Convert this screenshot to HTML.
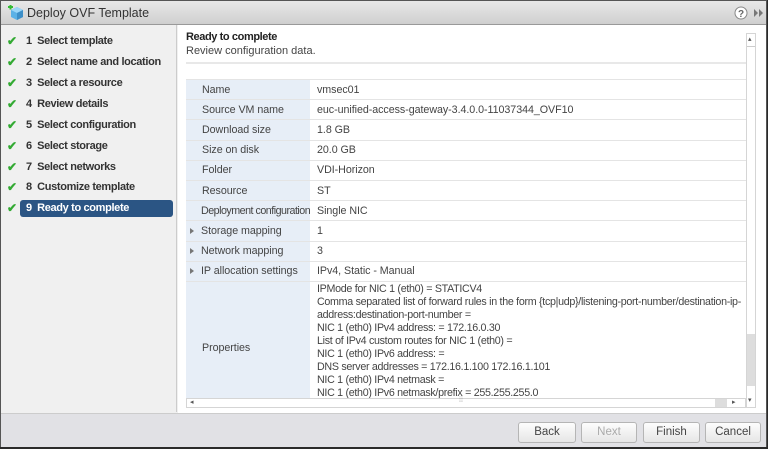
<!DOCTYPE html>
<html><head><meta charset="utf-8"><style>
*{margin:0;padding:0;box-sizing:border-box}
body{width:768px;height:449px;overflow:hidden;background:#2a2a2a;font-family:"Liberation Sans",sans-serif;font-size:11px;color:#333;position:relative}
.win{position:absolute;left:0;top:0;width:767px;height:447px;background:#f0f0f0;border:1px solid #555;}
.title{position:absolute;left:0;top:0;width:765px;height:24px;background:linear-gradient(#e8e8e8,#cfcfcf);border-bottom:1px solid #999}
.title span{position:absolute;left:26px;top:5px;font-size:12.5px;color:#333}
.left{position:absolute;left:0;top:24px;width:176px;height:387px;background:#f0f0f0;border-right:1px solid #ccc}
.step{position:absolute;left:0;height:17px;width:176px;font-weight:bold;font-size:11px;color:#333;letter-spacing:-0.35px;white-space:nowrap}
.step .ck{position:absolute;left:6px;top:1px;color:#3a3;font-size:12px;font-weight:bold;letter-spacing:0}
.step .t{position:absolute;left:25px;top:2px}
.sel{position:absolute;left:19px;width:153px;height:17px;background:#2b5584;border-radius:3px}
.right{position:absolute;left:177px;top:24px;width:588px;height:388px;background:#fff}
.bottom{position:absolute;left:0;top:412px;width:765px;height:34px;background:#e1e1e5;border-top:1px solid #ccc}
.btn{position:absolute;top:8px;height:21px;border:1px solid #b5b5b5;border-radius:3px;background:linear-gradient(#fdfdfd,#e6e6e6);text-align:center;line-height:19px;font-size:11.5px;color:#444}
.tw{position:absolute;left:8px;top:54px;width:560px;height:319px;overflow:hidden}
table{width:560px;border-collapse:collapse;table-layout:fixed}
td{border-top:1px solid #e4e4e4;height:20.2px;padding:0 0 0 7px;font-size:10.7px;color:#444;vertical-align:middle;white-space:nowrap;overflow:hidden;letter-spacing:-0.05px}
td.l{background:#e7eef7;width:124px;padding-left:16px}
td.l.a{padding-left:4px}
.tri{display:inline-block;width:0;height:0;border-left:4px solid #777;border-top:3px solid transparent;border-bottom:3px solid transparent;margin-right:7px}
</style></head><body>
<div class="win">
<div class="title">
<svg style="position:absolute;left:7px;top:4px" width="16" height="16"><polygon points="3,5 9,2 15,5 15,12 9,15 3,12" fill="#5bb1e6"/><polygon points="3,5 9,8 15,5 9,2" fill="#9bd6f7"/><polygon points="9,8 15,5 15,12 9,15" fill="#3d8fc8"/><rect x="0" y="1" width="5" height="2" fill="#3b3"/><rect x="1.5" y="-0.5" width="2" height="5" fill="#3b3"/></svg>
<span>Deploy OVF Template</span>
<svg style="position:absolute;left:733px;top:5px" width="14" height="14"><circle cx="7" cy="7" r="6" fill="#fff" stroke="#888"/><text x="7" y="11" font-size="10" text-anchor="middle" fill="#666" font-family="Liberation Sans" font-weight="bold">?</text></svg>
<svg style="position:absolute;left:753px;top:8px" width="10" height="8"><polygon points="0,0 4,4 0,8" fill="#777"/><polygon points="5,0 9,4 5,8" fill="#777"/></svg>
</div>
<div class="left">
<div class="step" style="top:8px"><span class="ck">✔</span><span class="t">1&nbsp; Select template</span></div>
<div class="step" style="top:29px"><span class="ck">✔</span><span class="t">2&nbsp; Select name and location</span></div>
<div class="step" style="top:50px"><span class="ck">✔</span><span class="t">3&nbsp; Select a resource</span></div>
<div class="step" style="top:71px"><span class="ck">✔</span><span class="t">4&nbsp; Review details</span></div>
<div class="step" style="top:92px"><span class="ck">✔</span><span class="t">5&nbsp; Select configuration</span></div>
<div class="step" style="top:113px"><span class="ck">✔</span><span class="t">6&nbsp; Select storage</span></div>
<div class="step" style="top:134px"><span class="ck">✔</span><span class="t">7&nbsp; Select networks</span></div>
<div class="step" style="top:154px"><span class="ck">✔</span><span class="t">8&nbsp; Customize template</span></div>
<div class="sel" style="top:175px"></div>
<div class="step" style="top:175px;color:#fff"><span class="ck">✔</span><span class="t">9&nbsp; Ready to complete</span></div>
</div>
<div class="right">
<div style="position:absolute;left:8px;top:6px;font-weight:bold;font-size:11px;color:#222;letter-spacing:-0.4px">Ready to complete</div>
<div style="position:absolute;left:8px;top:20px;font-size:11px;color:#444">Review configuration data.</div>
<div style="position:absolute;left:8px;top:37px;width:560px;height:2px;background:#e8e8e8"></div>
<div class="tw">
<table>
<tr><td class="l">Name</td><td>vmsec01</td></tr>
<tr><td class="l">Source VM name</td><td>euc-unified-access-gateway-3.4.0.0-11037344_OVF10</td></tr>
<tr><td class="l">Download size</td><td>1.8 GB</td></tr>
<tr><td class="l">Size on disk</td><td>20.0 GB</td></tr>
<tr><td class="l">Folder</td><td>VDI-Horizon</td></tr>
<tr><td class="l">Resource</td><td>ST</td></tr>
<tr><td class="l" style="letter-spacing:-0.5px;padding-left:15px">Deployment configuration</td><td>Single NIC</td></tr>
<tr><td class="l a"><span class="tri"></span>Storage mapping</td><td>1</td></tr>
<tr><td class="l a"><span class="tri"></span>Network mapping</td><td>3</td></tr>
<tr><td class="l a"><span class="tri"></span>IP allocation settings</td><td>IPv4, Static - Manual</td></tr>
<tr><td class="l" style="height:118px;padding-top:14px">Properties</td><td style="line-height:13px;padding-top:1px;vertical-align:top;letter-spacing:-0.3px">IPMode for NIC 1 (eth0) = STATICV4<br>Comma separated list of forward rules in the form {tcp|udp}/listening-port-number/destination-ip-<br>address:destination-port-number =<br>NIC 1 (eth0) IPv4 address: = 172.16.0.30<br>List of IPv4 custom routes for NIC 1 (eth0) =<br>NIC 1 (eth0) IPv6 address: =<br>DNS server addresses = 172.16.1.100 172.16.1.101<br>NIC 1 (eth0) IPv4 netmask =<br>NIC 1 (eth0) IPv6 netmask/prefix = 255.255.255.0</td></tr>
</table>
</div>
<div style="position:absolute;left:8px;top:373px;width:560px;height:10px;border:1px solid #d5d5d5;background:#fff"><span style="position:absolute;left:3px;top:-1px;font-size:7px;color:#555">◂</span><span style="position:absolute;left:272px;top:-2px;font-size:7px;color:#999">⁞⁞</span><span style="position:absolute;left:545px;top:-1px;font-size:7px;color:#555">▸</span><div style="position:absolute;left:528px;top:0;width:12px;height:8px;background:#ddd"></div></div>
<div style="position:absolute;left:568px;top:8px;width:10px;height:375px;border:1px solid #d5d5d5;background:#fff"><span style="position:absolute;left:1px;top:1px;font-size:7px;color:#555">▴</span><div style="position:absolute;left:0;top:12px;width:8px;height:1px;background:#ccc"></div><div style="position:absolute;left:0;top:300px;width:8px;height:52px;background:#ddd"></div><span style="position:absolute;left:1px;top:362px;font-size:7px;color:#555">▾</span></div>
</div>
<div class="bottom">
<div class="btn" style="left:517px;width:58px">Back</div>
<div class="btn" style="left:580px;width:56px;color:#aaa">Next</div>
<div class="btn" style="left:642px;width:57px">Finish</div>
<div class="btn" style="left:704px;width:56px">Cancel</div>
</div>
</div>
</body></html>
